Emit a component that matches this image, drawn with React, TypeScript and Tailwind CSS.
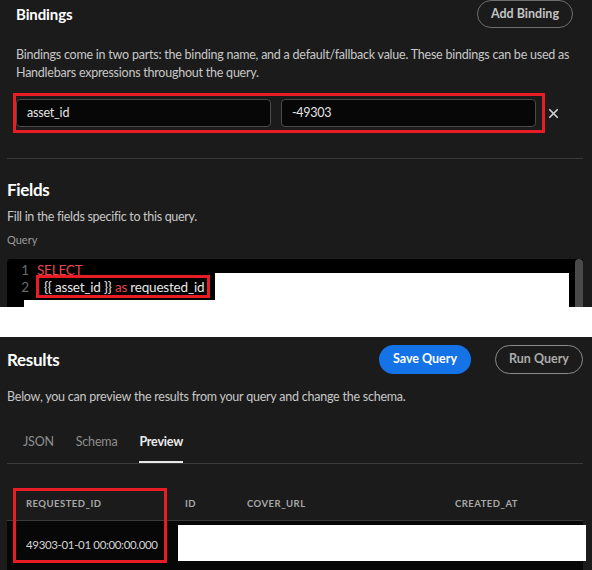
import { X } from "lucide-react";

function TopPanel() {
  return (
    <div className="relative h-[307px] bg-[#1b1b1b] pl-[7px] pr-[9px] overflow-hidden">
      <div className="pl-[9px] pr-[10px]">
        <div className="flex h-[28px] items-center justify-between">
          <h2 className="text-[15px] font-bold text-white leading-none tracking-[-0.1px]">Bindings</h2>
          <button className="h-[28px] w-[96px] rounded-full border border-[#6e6e6e] text-[12.5px] font-bold text-[#c4c4c4]">
            Add Binding
          </button>
        </div>
        <p className="mt-[18px] text-[12.5px] leading-[18px] tracking-[-0.23px] text-[#c8c8c8] whitespace-nowrap">
          Bindings come in two parts: the binding name, and a default/fallback value. These bindings can be used as
          <br />
          Handlebars expressions throughout the query.
        </p>
        <div className="mt-[17px] flex items-center">
          <div className="flex h-[28px] w-[255px] items-center rounded-[4px] border border-[#4a4a4a] bg-[#070707] pl-[10px] text-[12.5px] tracking-[-0.2px] text-[#e4e4e4]">
            asset_id
          </div>
          <div className="ml-[10px] flex h-[28px] w-[255px] items-center rounded-[4px] border border-[#4a4a4a] bg-[#070707] pl-[10px] text-[12.5px] tracking-[-0.3px] text-[#e4e4e4]">
            -49303
          </div>
          <X className="ml-[10px] h-[15px] w-[15px] text-[#d0d0d0]" strokeWidth={2.75} />
        </div>
      </div>

      <div className="mt-[31px] h-px bg-[#3a3a3a]" />

      <h2 className="mt-[19px] text-[17px] font-bold leading-[24px] tracking-[-0.3px] text-white">Fields</h2>
      <p className="mt-[6px] text-[12.5px] leading-[18px] tracking-[-0.3px] text-[#c8c8c8]">
        Fill in the fields specific to this query.
      </p>
      <div className="mt-[6px] text-[11px] leading-[16px] text-[#9a9a9a]">Query</div>

      <div className="mt-[11px] flex h-[60px] bg-black rounded-tl-[4px]">
        <div className="flex-1 pt-[3px] text-[13.5px] leading-[17px] tracking-[-0.2px]">
          <div className="flex">
            <span className="w-[22px] text-right text-[#6a6a6a]">1</span>
            <span className="ml-[8px] text-[#e5484d]">SELECT</span>
          </div>
          <div className="flex">
            <span className="w-[22px] text-right text-[#6a6a6a]">2</span>
            <span className="ml-[15px] text-[#e8e8e8]">
              {"{{ asset_id }} "}
              <span className="text-[#e5484d]">as</span> requested_id
            </span>
          </div>
        </div>
        <div className="w-[8px] rounded-t-full bg-[#4a4a4a]" />
      </div>

      {/* redactions + annotation */}
      <div className="absolute left-[215px] top-[273px] h-[34px] w-[354px] bg-white" />
      <div className="absolute left-[24px] top-[300px] h-[7px] w-[545px] bg-white" />
      <div className="absolute left-[36px] top-[275px] h-[23px] w-[174px] border-[3px] border-[#e81c24]" />
      <div className="absolute left-[13px] top-[93px] h-[40px] w-[532px] border-[3px] border-[#e81c24]" />
    </div>
  );
}

function BottomPanel() {
  const tabs = ["JSON", "Schema", "Preview"];
  return (
    <div className="relative h-[233px] bg-[#1b1b1b] pl-[7px] pr-[9px] pt-[8px] overflow-hidden">
      <div className="flex h-[29px] items-center justify-between">
        <h2 className="text-[17px] font-bold leading-none tracking-[-0.3px] text-white">Results</h2>
        <div className="flex">
          <button className="h-[29px] w-[92px] rounded-full bg-[#1473e6] text-[12.5px] font-bold text-white">
            Save Query
          </button>
          <button className="ml-[24px] h-[29px] w-[88px] rounded-full border border-[#8a8a8a] text-[12.5px] font-bold text-[#ababab]">
            Run Query
          </button>
        </div>
      </div>
      <p className="mt-[14px] text-[12.5px] leading-[18px] tracking-[-0.23px] text-[#c8c8c8]">
        Below, you can preview the results from your query and change the schema.
      </p>

      <div className="mt-[27px] flex border-b border-[#3a3a3a] pl-[16px]">
        {tabs.map((t) => (
          <div
            key={t}
            className={`mr-[22px] pb-[10px] text-[12.5px] leading-[18px] tracking-[-0.2px] border-b-2 ${
              t === "Preview" ? "border-[#e8e8e8] text-[#ececec] font-bold" : "border-transparent text-[#8e8e8e]"
            }`}
          >
            {t}
          </div>
        ))}
      </div>

      <div className="mt-[34px] flex text-[9.5px] font-bold uppercase leading-[12px] tracking-[0.05em] text-[#a8a8a8]">
        <span className="w-[178px] pl-[19px]">requested_id</span>
        <span className="w-[62px]">id</span>
        <span className="w-[208px]">cover_url</span>
        <span>created_at</span>
      </div>
      <div className="mt-[10px] h-[60px] border-t border-[#3a3a3a] bg-[#070707] pl-[19px] pt-[15px] text-[11.5px] leading-[18px] tracking-[-0.35px] text-[#d4d4d4]">
        49303-01-01 00:00:00.000
      </div>

      <div className="absolute left-[178px] top-[188px] h-[36px] w-[408px] bg-white" />
      <div className="absolute left-[13px] top-[151px] h-[75px] w-[154px] border-[3px] border-[#e81c24]" />
    </div>
  );
}

export default function App() {
  return (
    <div className="h-[570px] w-[592px] overflow-hidden bg-white [font-family:Lato,sans-serif]">
      <TopPanel />
      <div className="h-[30px]" />
      <BottomPanel />
    </div>
  );
}
